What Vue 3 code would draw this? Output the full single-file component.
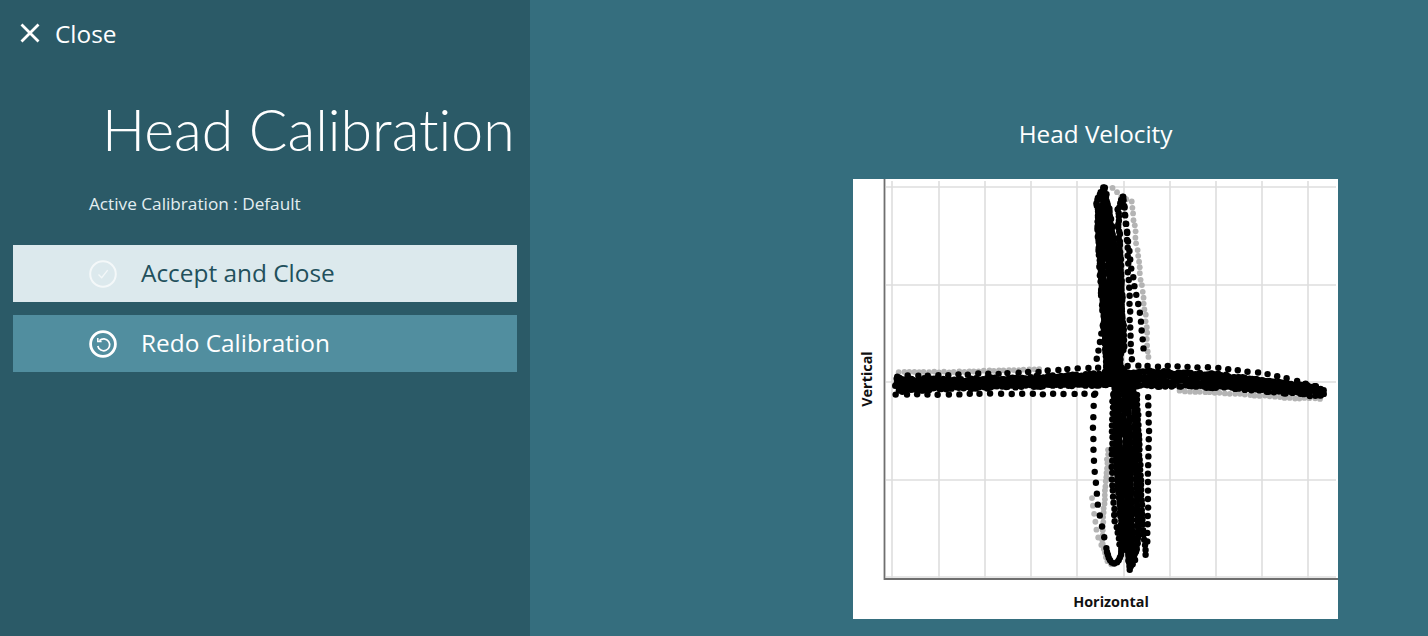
<template>
  <div class="screen">
    <aside class="side-panel">
      <button class="close-btn">
        <svg width="20" height="20" viewBox="0 0 20 20" fill="none" stroke="currentColor" stroke-width="2.8">
          <path d="M1.5 1.5l17 17M18.5 1.5l-17 17" />
        </svg>
        <span>Close</span>
      </button>
      <h1 class="title">Head Calibration</h1>
      <p class="active-label">Active Calibration : Default</p>
      <button class="action action-accept">
        <svg width="28" height="28" viewBox="0 0 28 28" fill="none" stroke="#f4f8f9" stroke-width="2">
          <circle cx="14" cy="14" r="12.8" />
          <path d="M9.5 14.5l3.2 3.2 6-7.5" stroke-width="1.3" />
        </svg>
        <span>Accept and Close</span>
      </button>
      <button class="action action-redo">
        <svg width="28" height="28" viewBox="0 0 28 28" fill="none" stroke="#fff">
          <circle cx="14" cy="14" r="12.4" stroke-width="2.8" />
          <path d="M10.4 10.6a6 6 0 1 1-1.6 5.4" stroke-width="1.7" />
          <path d="M8.8 8v3.6h3.8" stroke-width="1.5" />
        </svg>
        <span>Redo Calibration</span>
      </button>
    </aside>

    <main class="chart-panel">
      <h2 class="chart-title">Head Velocity</h2>
      <div class="chart-card">
        <svg class="chart" width="485" height="440" viewBox="853 179 485 440">
          <g stroke="#dedede" stroke-width="1.6">
            <line v-for="x in gridX" :key="x" :x1="x" :x2="x" y1="181" y2="578" />
            <line v-for="y in gridY" :key="y" x1="886" x2="1336" :y1="y" :y2="y" />
          </g>
          <path d="M884.5 179V579H1338" fill="none" stroke="#6f6f6f" stroke-width="1.8" />
          <g fill="#b4b4b4">
            <circle v-for="(d, i) in grayDots" :key="i" :cx="d.x" :cy="d.y" r="2.9" />
          </g>
          <g fill="#000">
            <circle v-for="(d, i) in blackDots" :key="i" :cx="d.x" :cy="d.y" r="3.2" />
          </g>
          <text class="axis-label" transform="translate(872 379) rotate(-90)" text-anchor="middle">Vertical</text>
          <text class="axis-label" x="1111" y="607" text-anchor="middle">Horizontal</text>
        </svg>
      </div>
    </main>
  </div>
</template>

<script setup>
const gridX = [892, 939, 985, 1031, 1077, 1124, 1170, 1216, 1262, 1308];
const gridY = [187, 285, 382, 480, 577];

let seed = 7;
function rnd() {
  seed = (seed * 16807) % 2147483647;
  return seed / 2147483647 - 0.5;
}

// walk along a polyline and drop a dot every `step` pixels, `wobble` px of scatter
function sample(points, step, wobble = 0) {
  const out = [];
  let left = 0;
  for (let i = 0; i < points.length - 1; i++) {
    const [x1, y1] = points[i];
    const [x2, y2] = points[i + 1];
    const len = Math.hypot(x2 - x1, y2 - y1);
    let at = left;
    while (at < len) {
      const t = at / len;
      out.push({
        x: x1 + (x2 - x1) * t + rnd() * wobble,
        y: y1 + (y2 - y1) * t + rnd() * wobble
      });
      at += step;
    }
    left = at - len;
  }
  return out;
}

const blackTraces = [
  // horizontal sweep, outer rows
  [[[898, 376], [950, 375], [1010, 373], [1060, 370], [1100, 367], [1157, 366], [1220, 368], [1260, 373], [1300, 381], [1325, 390]], 10, 1.5],
  [[[896, 395], [960, 394], [1040, 394], [1105, 393]], 10.5, 1],
  [[[1150, 373], [1200, 375], [1250, 379], [1300, 386], [1325, 392]], 6, 1.5],
  // horizontal sweep, solid core
  [[[896, 379], [960, 380], [1040, 377], [1110, 374]], 3, 2.5],
  [[[896, 383], [960, 383], [1040, 380], [1110, 377]], 3, 2.5],
  [[[896, 387], [960, 386], [1040, 383], [1110, 381]], 3, 2.5],
  [[[900, 391], [960, 388], [1040, 386], [1110, 384]], 3.5, 2.5],
  [[[1105, 372], [1160, 372], [1220, 375], [1270, 381], [1322, 388]], 3, 2.5],
  [[[1105, 376], [1160, 377], [1220, 379], [1270, 384], [1325, 391]], 3, 2.5],
  [[[1105, 380], [1160, 381], [1220, 383], [1270, 387], [1325, 393]], 3, 2.5],
  [[[1105, 384], [1160, 386], [1220, 387], [1270, 391], [1322, 396]], 3.5, 2.5],
  // vertical sweep, upper core
  [[[1104, 187], [1097, 200], [1099, 250], [1102, 300], [1105, 340], [1108, 385]], 3, 1.5],
  [[[1104, 187], [1101, 230], [1104, 280], [1107, 330], [1110, 385]], 2.5, 2],
  [[[1104, 187], [1105, 205], [1108, 260], [1111, 320], [1114, 385]], 2.5, 2],
  [[[1106, 195], [1110, 230], [1113, 290], [1116, 335], [1118, 385]], 2.5, 2],
  [[[1108, 205], [1114, 240], [1118, 300], [1120, 340], [1122, 385]], 3, 2],
  [[[1123, 197], [1118, 210], [1120, 250], [1122, 300], [1124, 350]], 3.5, 1.5],
  // vertical sweep, upper dotted edges
  [[[1123, 197], [1125, 215], [1128, 240], [1131, 265], [1135, 290], [1140, 312], [1142, 335], [1144, 355]], 9, 0.6],
  [[[1124, 200], [1127, 230], [1128, 270], [1130, 300], [1130, 335], [1132, 360]], 8, 1],
  [[[1106, 300], [1104, 318], [1101, 336], [1098, 353], [1095, 365]], 8.5, 0.4],
  // vertical sweep, lower core
  [[[1118, 385], [1120, 440], [1122, 500], [1127, 545], [1130, 570]], 2.5, 2],
  [[[1123, 385], [1125, 440], [1127, 500], [1129, 545], [1131, 568]], 2.5, 2],
  [[[1128, 385], [1130, 440], [1131, 500], [1132, 545], [1132, 566]], 2.5, 2],
  [[[1133, 385], [1135, 440], [1137, 500], [1138, 535], [1134, 562]], 2.5, 2],
  [[[1114, 385], [1116, 440], [1118, 490], [1121, 525], [1125, 550]], 4, 1.5],
  [[[1113, 395], [1112, 440], [1112, 480], [1115, 520], [1120, 545]], 6, 1],
  [[[1137, 395], [1139, 440], [1141, 490], [1143, 530], [1146, 555], [1143, 558]], 5, 1],
  // vertical sweep, lower dotted edges and loop
  [[[1148, 397], [1149, 430], [1148, 470], [1148, 510], [1147, 545]], 8.5, 0.4],
  [[[1094, 395], [1093, 430], [1094, 462], [1096, 486], [1098, 505], [1101, 522], [1104, 535], [1106, 546], [1109, 558]], 11, 0.4],
  [[[1107, 552], [1109, 559], [1113, 564], [1118, 562], [1121, 555], [1122, 535]], 3, 0.2]
];

const grayTraces = [
  [[[899, 372], [960, 372], [1040, 369]], 5, 1],
  [[[1180, 391], [1240, 394], [1290, 398], [1322, 399]], 5, 1],
  [[[1113, 188], [1120, 196], [1132, 202], [1136, 240], [1141, 280], [1146, 320], [1148, 358]], 6, 1],
  [[[1108, 450], [1106, 480], [1104, 510], [1102, 540], [1106, 560], [1114, 566]], 4.5, 1],
  [[[1092, 498], [1097, 535], [1103, 548]], 8, 0.5]
];

const blackDots = blackTraces.flatMap(([pts, step, wobble]) => sample(pts, step, wobble));
const grayDots = grayTraces.flatMap(([pts, step, wobble]) => sample(pts, step, wobble));
</script>

<style scoped>
.screen {
  display: flex;
  width: 1428px;
  height: 636px;
  overflow: hidden;
  font-family: "Open Sans", "Noto Sans", sans-serif;
  color: #fff;
}

.side-panel {
  width: 530px;
  flex-shrink: 0;
  box-sizing: border-box;
  padding: 16px 13px 0;
  background: #2b5a67;
}

.close-btn {
  display: flex;
  align-items: center;
  gap: 15px;
  height: 34px;
  padding: 0 0 0 7px;
  background: none;
  border: none;
  color: #fff;
  font: inherit;
  font-size: 24.4px;
}

.title {
  margin: 38px 0 0 89px;
  font-family: Lato, "Open Sans", sans-serif;
  font-size: 57.2px;
  line-height: 82px;
  font-weight: 300;
  font-variant-ligatures: none;
  white-space: nowrap;
}

.active-label {
  margin: 22px 0 0 76px;
  font-size: 17.2px;
  line-height: 24px;
  color: #e3eef1;
}

.action {
  display: flex;
  align-items: center;
  gap: 24px;
  width: 504px;
  height: 57px;
  padding: 0 0 3px 76px;
  border: none;
  font: inherit;
  font-size: 24.4px;
}

.action svg {
  margin-top: 3px;
}

.action-accept {
  margin-top: 29px;
  background: #dce9ed;
  color: #22505c;
}

.action-redo {
  margin-top: 13px;
  background: #518e9f;
  color: #fff;
}

.chart-panel {
  flex: 1;
  display: flex;
  flex-direction: column;
  align-items: center;
  padding: 117px 0 0 233px;
  background: #356e7e;
}

.chart-title {
  margin: 0;
  font-size: 24.3px;
  line-height: 33px;
  font-weight: 400;
}

.chart-card {
  margin-top: 29px;
  width: 485px;
  height: 440px;
  background: #fff;
}

.chart {
  display: block;
}

.axis-label {
  font-family: "Open Sans", sans-serif;
  font-size: 14.4px;
  font-weight: 700;
  fill: #111;
}
</style>

<style>
html,
body {
  margin: 0;
  background: #356e7e;
}
</style>
